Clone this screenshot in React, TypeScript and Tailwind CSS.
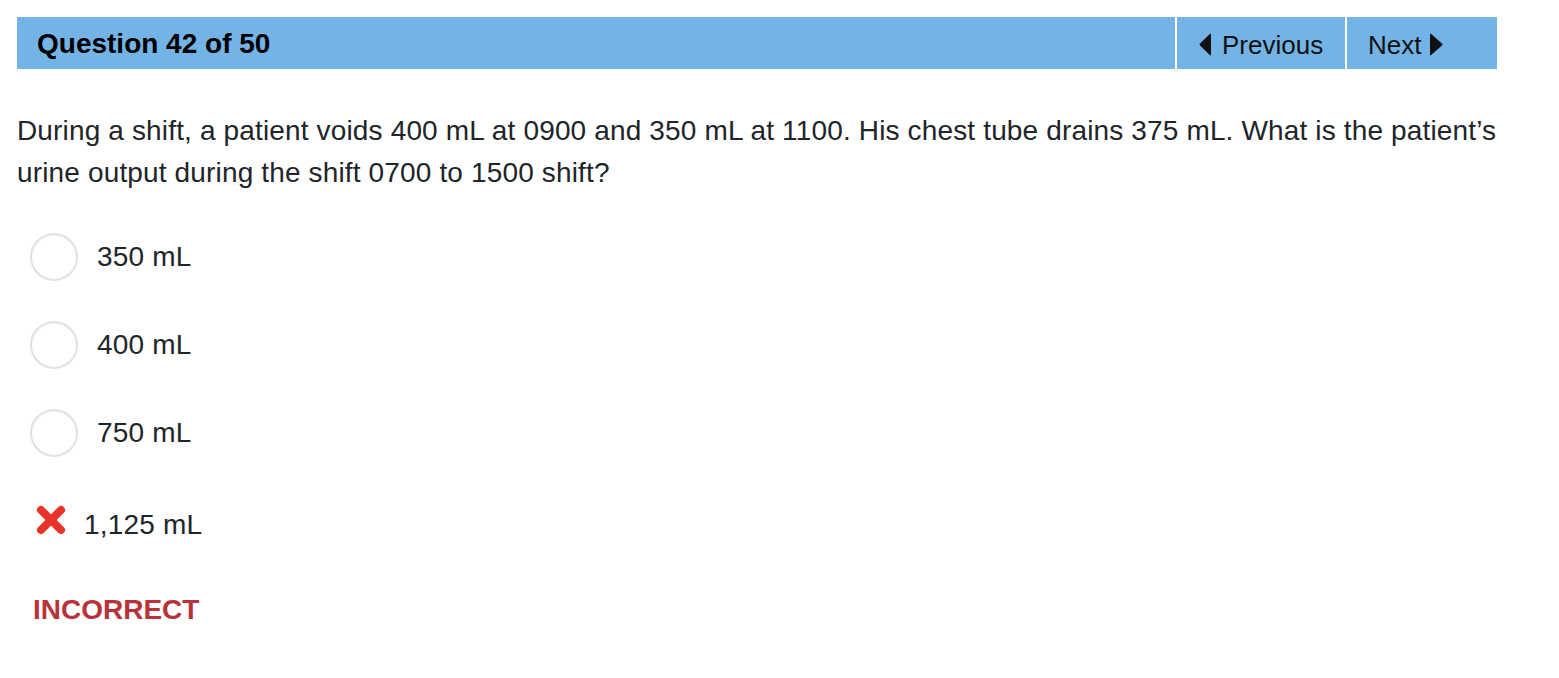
import React from "react";

const font = { fontFamily: '"Liberation Sans", Arial, Helvetica, sans-serif' };

function Radio() {
  return (
    <div className="w-[48px] h-[48px] rounded-full border-2 border-[#e2e2e2] bg-white shadow-[inset_0_1px_2px_rgba(0,0,0,0.06)] shrink-0" />
  );
}

function Option({ label }: { label: string }) {
  return (
    <div className="flex items-center h-[48px] pl-[13px]">
      <Radio />
      <span className="ml-[19px] text-[28px] tracking-[0.2px] text-[#212529] leading-none">{label}</span>
    </div>
  );
}

export default function App() {
  return (
    <div className="bg-white min-h-[678px] pt-[17px] pl-[17px]" style={font}>
      <div className="w-[1480px]">
        <div className="flex h-[52px] bg-white">
          <div className="flex-1 bg-[#74b3e6] flex items-center pl-[20px] pt-[2px]">
            <span className="text-[28px] font-bold text-black leading-none">Question 42 of 50</span>
          </div>
          <button className="ml-[2px] w-[168px] bg-[#74b3e6] flex items-center pl-[22px] pt-[4px] text-[26px] text-[#111] leading-none">
            <svg width="13" height="23" viewBox="0 0 13 23" className="mr-[10px] -mt-[2px]">
              <path d="M12 1.5 L12 21.5 Q12 23 10.8 22 L1 12.5 Q0 11.5 1 10.5 L10.8 1 Q12 0 12 1.5 Z" fill="#111" />
            </svg>
            Previous
          </button>
          <button className="ml-[2px] w-[150px] bg-[#74b3e6] flex items-center pl-[21px] pt-[4px] text-[26px] text-[#111] leading-none">
            Next
            <svg width="14" height="23" viewBox="0 0 14 23" className="ml-[8px] -mt-[2px]">
              <path d="M1 1.5 L1 21.5 Q1 23 2.2 22 L13 12.5 Q14 11.5 13 10.5 L2.2 1 Q1 0 1 1.5 Z" fill="#111" />
            </svg>
          </button>
        </div>

        <p className="mt-[41px] text-[28px] tracking-[0.15px] leading-[42px] text-[#212529]">
          During a shift, a patient voids 400 mL at 0900 and 350 mL at 1100. His chest tube drains 375 mL. What is the patient’s urine output during the shift 0700 to 1500 shift?
        </p>

        <div className="mt-[39px] flex flex-col gap-[40px]">
          <Option label="350 mL" />
          <Option label="400 mL" />
          <Option label="750 mL" />
          <div className="flex items-center h-[48px] pl-[19px] mt-[4px]">
            <svg width="30" height="30" viewBox="0 0 30 30" className="mb-[10px] shrink-0">
              <path d="M5 5 L25 25 M25 5 L5 25" stroke="#e8332a" strokeWidth="8" strokeLinecap="round" />
            </svg>
            <span className="ml-[18px] text-[28px] tracking-[0.2px] text-[#212529] leading-none">1,125 mL</span>
          </div>
        </div>

        <div className="mt-[40px] pl-[16px] text-[28px] leading-[42px] font-bold text-[#b8323a]">INCORRECT</div>
      </div>
    </div>
  );
}
